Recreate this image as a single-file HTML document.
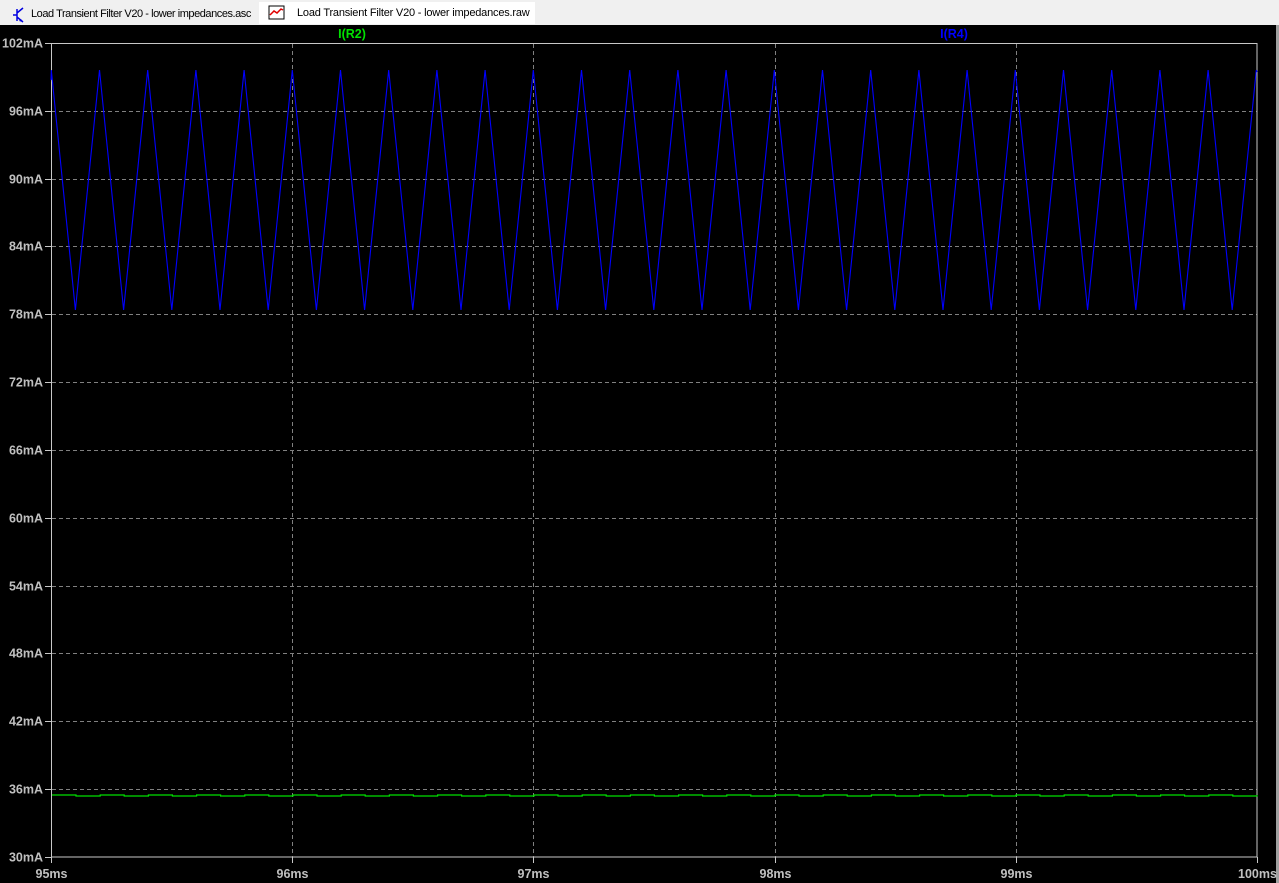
<!DOCTYPE html>
<html><head><meta charset="utf-8"><style>
html,body{margin:0;padding:0;width:1279px;height:883px;overflow:hidden;background:#000;font-family:"Liberation Sans",sans-serif}
#tabs{position:absolute;left:0;top:0;width:1279px;height:25px;background:#f0f0f0;border-bottom:1px solid #d0d0d0}
.tab{position:absolute;top:3px;height:21px;font-size:11px;line-height:21px;color:#000;white-space:nowrap}
.tab span{white-space:nowrap;letter-spacing:-0.2px}
svg{position:absolute;left:0;top:0}
</style></head><body>
<div id="tabs">
<div class="tab" style="left:3px;width:252px;top:4px"><svg width="20" height="18" style="position:absolute;left:8px;top:2px"><path d="M6 3V15M6 9L2 9M6 7L12 2M6 11L12 16" stroke="#0000e0" stroke-width="1.5" fill="none"/><path d="M12 16l-4 -1 2 -2z" fill="#0000e0"/></svg><span style="position:absolute;left:28px;letter-spacing:-0.45px">Load Transient Filter V20 - lower impedances.asc</span></div>
<div class="tab" style="left:259px;width:276px;background:#fff;top:2px;height:22px"><svg width="20" height="18" style="position:absolute;left:9px;top:2px"><rect x="1" y="2" width="15" height="13" fill="#fff" stroke="#000"/><path d="M2 11L6 7L9 9L13 5L15 6" stroke="#e00000" stroke-width="1.5" fill="none"/><path d="M1 15h15" stroke="#000" stroke-dasharray="1 1"/></svg><span style="position:absolute;left:38px;line-height:22px">Load Transient Filter V20 - lower impedances.raw</span></div>
</div>
<svg width="1279" height="883" viewBox="0 0 1279 883" style="top:0">
<rect x="0" y="25" width="1279" height="858" fill="#000"/>
<rect x="1276" y="25" width="3" height="858" fill="#a0a0a0"/>
<g id="grid" stroke="#808080" stroke-dasharray="4 3" stroke-width="1"></g>
<rect x="51.5" y="43.5" width="1205.5" height="813.5" fill="none" stroke="#c8c8c8" stroke-width="1"/>
<g id="labels" fill="#c0c0c0" font-family="Liberation Sans,sans-serif" font-weight="bold" font-size="12.5"></g>
<text x="352" y="38" fill="#00e000" font-weight="bold" font-size="12.5" text-anchor="middle" font-family="Liberation Sans,sans-serif">I(R2)</text>
<text x="954" y="38" fill="#0000ff" font-weight="bold" font-size="12.5" text-anchor="middle" font-family="Liberation Sans,sans-serif">I(R4)</text>
<path id="green" stroke="#00e000" stroke-width="1.2" fill="none"/>
<path id="blue" stroke="#0000ff" stroke-width="1.1" fill="none"/>
</svg>
<script>
var ns="http://www.w3.org/2000/svg",g=document.getElementById('grid'),L=document.getElementById('labels');
function el(p,t,a,txt){var e=document.createElementNS(ns,t);for(var k in a)e.setAttribute(k,a[k]);if(txt)e.textContent=txt;p.appendChild(e);}
for(var i=0;i<=12;i++){var y=43+i*67.83;var yy=Math.round(y)+0.5;
 if(i>0&&i<12)el(g,'line',{x1:52,x2:1257,y1:yy,y2:yy});
 el(L,'line',{x1:45,x2:51,y1:yy,y2:yy,stroke:'#c8c8c8'});
 el(L,'text',{x:43,y:yy+4,'text-anchor':'end'},(102-6*i)+'mA');}
for(var j=0;j<=5;j++){var x=Math.round(51+j*241.2)+0.5;
 if(j>0&&j<5)el(g,'line',{x1:x,x2:x,y1:44,y2:857});
 el(L,'line',{x1:x,x2:x,y1:857,y2:863,stroke:'#c8c8c8'});
 el(L,'text',{x:x,y:878,'text-anchor':'middle'},(95+j)+'ms');}
var P=48.2,d='M51 80';
for(var k=0;k<26;k++){var px=99.5+(k-1)*P;var tx=px+24.1;if(px>51&&px<=1257)d+=' L'+px+' 70';if(tx>51&&tx<=1257)d+=' L'+tx+' 310';}
d+=' L1257 72';document.getElementById('blue').setAttribute('d',d);
var gd='M52 795';for(var x2=52;x2<1257;x2+=48.2){gd+=' L'+(x2+24)+' 795 L'+(x2+24)+' 796 L'+(x2+48.2)+' 796 L'+(x2+48.2)+' 795';}
document.getElementById('green').setAttribute('d',gd);
</script>
</body></html>
